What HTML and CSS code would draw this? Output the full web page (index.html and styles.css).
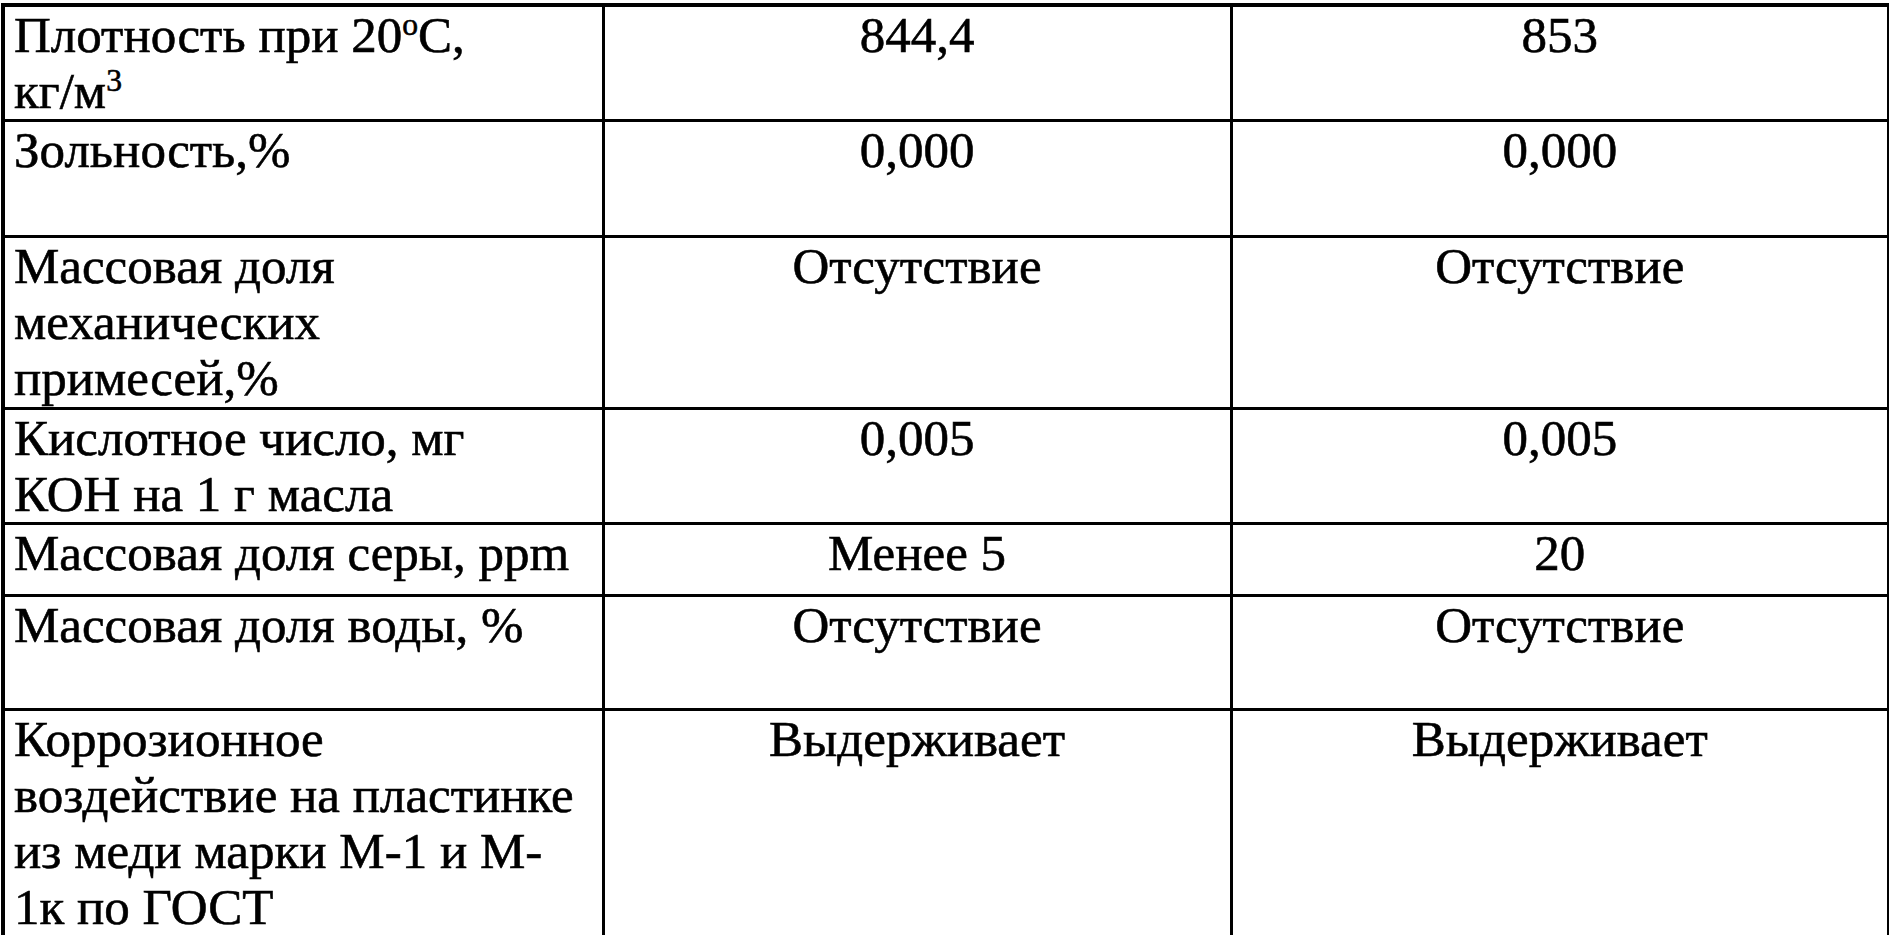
FILE: index.html
```html
<!DOCTYPE html>
<html lang="ru">
<head>
<meta charset="utf-8">
<title>Показатели масла</title>
<link rel="stylesheet" href="styles.css">
</head>
<body>
<table class="props">
  <colgroup>
    <col class="c-name">
    <col class="c-val">
    <col class="c-val2">
  </colgroup>
  <tbody>
    <tr class="r1">
      <td class="name">Плотность при 20<sup>o</sup>С,<br>кг/м<sup>3</sup></td>
      <td class="val">844,4</td>
      <td class="val">853</td>
    </tr>
    <tr class="r2">
      <td class="name">Зольность,%</td>
      <td class="val">0,000</td>
      <td class="val">0,000</td>
    </tr>
    <tr class="r3">
      <td class="name">Массовая доля<br>механических<br>примесей,%</td>
      <td class="val">Отсутствие</td>
      <td class="val">Отсутствие</td>
    </tr>
    <tr class="r4">
      <td class="name">Кислотное число, мг<br>КОН на 1 г масла</td>
      <td class="val">0,005</td>
      <td class="val">0,005</td>
    </tr>
    <tr class="r5">
      <td class="name">Массовая доля серы, ppm</td>
      <td class="val">Менее 5</td>
      <td class="val">20</td>
    </tr>
    <tr class="r6">
      <td class="name">Массовая доля воды, %</td>
      <td class="val">Отсутствие</td>
      <td class="val">Отсутствие</td>
    </tr>
    <tr class="r7">
      <td class="name">Коррозионное<br>воздействие на пластинке<br>из меди марки М-1 и М-<br>1к по ГОСТ</td>
      <td class="val">Выдерживает</td>
      <td class="val">Выдерживает</td>
    </tr>
  </tbody>
</table>
</body>
</html>
```
FILE: styles.css
```css
html, body {
  margin: 0;
  padding: 0;
  background: #ffffff;
}

body {
  padding: 3px 0 0 1px;
  font-family: "Liberation Serif", "Times New Roman", serif;
  color: #000;
}

.props {
  border-collapse: collapse;
  table-layout: fixed;
  width: 1886px;
  border: 4px solid #000;
}

.c-name { width: 600px; }
.c-val { width: 628px; }
.c-val2 { width: 658px; }

.props td {
  border: 3px solid #000;
  vertical-align: top;
  padding: 0 4px 0 9px;
  font-size: 51px;
  line-height: 56px;
  white-space: nowrap;
  -webkit-text-stroke: 0.6px #000;
}

.props td.val {
  text-align: center;
  padding: 0 6px;
}

.props sup {
  display: inline-block;
  font-size: 0.62em;
  line-height: 1;
  vertical-align: top;
  margin-top: 2px;
}

.r1 { height: 113px; }
.r2 { height: 116px; }
.r3 { height: 172px; }
.r4 { height: 114px; }
.r5 { height: 72px; }
.r6 { height: 114px; }
.r7 { height: 225px; }
```
